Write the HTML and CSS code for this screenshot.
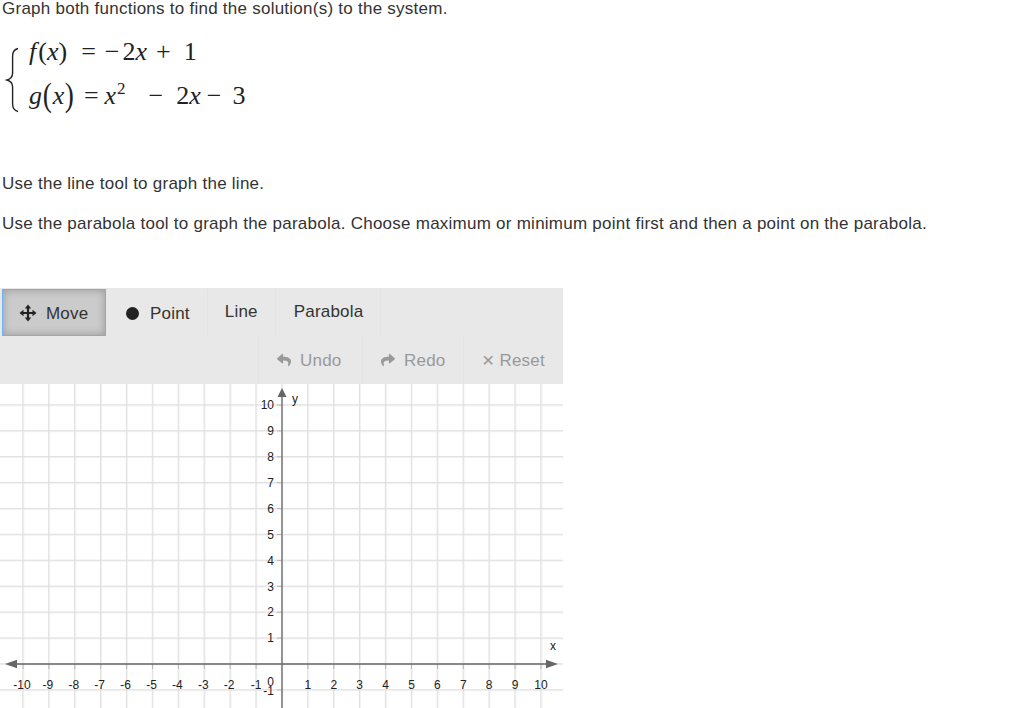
FILE: index.html
```html
<!DOCTYPE html>
<html>
<head>
<meta charset="utf-8">
<link rel="stylesheet" href="styles.css">
</head>
<body>
<p class="intro">Graph both functions to find the solution(s) to the system.</p>

<div class="system">
  <svg class="brace" width="16" height="66" viewBox="0 0 16 66">
    <path d="M14 1.5 C10 2.5 8.6 5 8.6 9 V26 C8.6 29.5 6.5 32 3 33 C6.5 34 8.6 36.5 8.6 40 V57 C8.6 61 10 63.5 14 64.5" fill="none" stroke="#222" stroke-width="1.4"/>
  </svg>
  <div class="eqs">
    <div class="eq eq1"><i>f</i>(<i>x</i>)<span class="rel">=</span><span class="neg">−</span>2<i>x</i><span class="plus">+</span>1</div>
    <div class="eq eq2"><i>g</i><span class="bp">(</span><i>x</i><span class="bp">)</span><span class="rel2">=</span><i>x</i><sup>2</sup><span class="min1">−</span>2<i>x</i><span class="min2">−</span>3</div>
  </div>
</div>

<p class="instr first">Use the line tool to graph the line.</p>
<p class="instr">Use the parabola tool to graph the parabola. Choose maximum or minimum point first and then a point on the parabola.</p>

<div class="widget">
  <div class="toolbar">
    <div class="row tools">
      <div class="tool move">
        <svg class="ico" width="18" height="18" viewBox="0 0 18 18">
          <path d="M9 2.5 V15.5 M2.5 9 H15.5" stroke="#222" stroke-width="2.2"/>
          <path d="M9 0.5 L12.2 4.5 H5.8 Z M9 17.5 L12.2 13.5 H5.8 Z M0.5 9 L4.5 5.8 V12.2 Z M17.5 9 L13.5 5.8 V12.2 Z" fill="#222"/>
        </svg>
        <span>Move</span>
      </div>
      <div class="tool point"><span class="dot"></span><span>Point</span></div>
      <div class="tool line"><span>Line</span></div>
      <div class="tool parabola"><span>Parabola</span></div>
    </div>
    <div class="row actions">
      <div class="act undo">
        <svg class="aico" width="16" height="14" viewBox="0 0 512 512"><path d="M8.3 189.8L184.3 37.9C199.7 24.5 224 35.3 224 56v80c160.6 1.8 288 34 288 186.3 0 61.4-39.6 122.3-83.3 154.1-13.7 9.9-33.1-2.5-28.1-18.6 45.3-145-21.5-183.5-176.6-185.7V360c0 20.7-24.3 31.5-39.7 18.2l-176-152c-11.1-9.6-11.1-26.8 0-36.4z" fill="#999"/></svg>
        <span>Undo</span>
      </div>
      <div class="act redo">
        <svg class="aico" width="16" height="14" viewBox="0 0 512 512"><path transform="translate(512 0) scale(-1 1)" d="M8.3 189.8L184.3 37.9C199.7 24.5 224 35.3 224 56v80c160.6 1.8 288 34 288 186.3 0 61.4-39.6 122.3-83.3 154.1-13.7 9.9-33.1-2.5-28.1-18.6 45.3-145-21.5-183.5-176.6-185.7V360c0 20.7-24.3 31.5-39.7 18.2l-176-152c-11.1-9.6-11.1-26.8 0-36.4z" fill="#999"/></svg>
        <span>Redo</span>
      </div>
      <div class="act reset">
        <span class="x">×</span>
        <span>Reset</span>
      </div>
    </div>
  </div>

  <svg class="graph" width="563" height="324" viewBox="0 0 563 324">
    <defs>
      <pattern id="grid" x="281.3" y="279.3" width="25.9" height="25.9" patternUnits="userSpaceOnUse">
        <rect x="0" y="0" width="25.9" height="1.4" fill="#e0e0e0"/>
        <rect x="0" y="0" width="1.4" height="25.9" fill="#e0e0e0"/>
      </pattern>
    </defs>
    <rect width="563" height="324" fill="#fff"/>
    <rect width="563" height="324" fill="url(#grid)"/>

    <g stroke="#b8b8b8" stroke-width="1">
      <path d="M23 280v5M48.9 280v5M74.8 280v5M100.7 280v5M126.6 280v5M152.5 280v5M178.4 280v5M204.3 280v5M230.2 280v5M256.1 280v5M307.9 280v5M333.8 280v5M359.7 280v5M385.6 280v5M411.5 280v5M437.4 280v5M463.3 280v5M489.2 280v5M515.1 280v5M541 280v5"/>
      <path d="M277 21h5M277 46.9h5M277 72.8h5M277 98.7h5M277 124.6h5M277 150.5h5M277 176.4h5M277 202.3h5M277 228.2h5M277 254.1h5M277 305.9h5"/>
    </g>

    <g stroke="#666" stroke-width="1.3">
      <line x1="282" y1="12" x2="282" y2="324"/>
      <line x1="15" y1="280" x2="548" y2="280"/>
    </g>
    <g fill="#666">
      <path d="M282 4 L286.5 13 H277.5 Z"/>
      <path d="M5 280 L17 275.8 V284.2 Z"/>
      <path d="M558 280 L546 275.8 V284.2 Z"/>
    </g>

    <g class="lbl" text-anchor="middle">
      <text x="22" y="305">-10</text>
      <text x="47.9" y="305">-9</text>
      <text x="73.8" y="305">-8</text>
      <text x="99.7" y="305">-7</text>
      <text x="125.6" y="305">-6</text>
      <text x="151.5" y="305">-5</text>
      <text x="177.4" y="305">-4</text>
      <text x="203.3" y="305">-3</text>
      <text x="229.2" y="305">-2</text>
      <text x="256.1" y="305">-1</text>
      <text x="307.9" y="305">1</text>
      <text x="333.8" y="305">2</text>
      <text x="359.7" y="305">3</text>
      <text x="385.6" y="305">4</text>
      <text x="411.5" y="305">5</text>
      <text x="437.4" y="305">6</text>
      <text x="463.3" y="305">7</text>
      <text x="489.2" y="305">8</text>
      <text x="515.1" y="305">9</text>
      <text x="541" y="305">10</text>
    </g>
    <g class="lbl" text-anchor="end">
      <text x="274" y="25.2">10</text>
      <text x="274" y="51.1">9</text>
      <text x="274" y="77">8</text>
      <text x="274" y="102.9">7</text>
      <text x="274" y="128.8">6</text>
      <text x="274" y="154.7">5</text>
      <text x="274" y="180.6">4</text>
      <text x="274" y="206.5">3</text>
      <text x="274" y="232.4">2</text>
      <text x="274" y="258.3">1</text>
      <text x="274" y="302">0</text>
      <text x="274" y="310.5">-1</text>
    </g>
    <g class="lbl">
      <text x="292" y="19">y</text>
      <text x="550" y="266">x</text>
    </g>
  </svg>
</div>
</body>
</html>
```

FILE: styles.css
```css
html, body {
  margin: 0;
  padding: 0;
  overflow: hidden;
  background: #fff;
}

body {
  font-family: "Liberation Sans", Arial, sans-serif;
  color: #333;
  font-size: 17px;
  letter-spacing: 0.25px;
  width: 1024px;
  height: 708px;
}

.intro {
  margin: 0;
  padding-left: 2px;
  line-height: 18px;
}

.system {
  display: flex;
  align-items: flex-start;
  margin-top: 20px;
  padding-left: 4px;
  height: 76px;
}

.brace {
  margin-top: 9px;
  flex: none;
}

.eqs {
  margin-left: 9px;
  font-family: "Liberation Serif", "Times New Roman", serif;
  font-size: 26px;
  letter-spacing: 0;
  color: #222;
}

.eq {
  white-space: nowrap;
}

.eq1 {
  line-height: 28px;
}

.eq2 {
  line-height: 30px;
  margin-top: 15px;
}

.eq i {
  font-style: italic;
}

.eq1 i:first-child {
  margin-right: 2px;
}

.eq sup {
  font-size: 17px;
  vertical-align: 10px;
  line-height: 0;
  margin-left: 1px;
}

.rel {
  margin: 0 9px 0 14px;
}

.neg {
  margin-right: 3px;
}

.plus {
  margin: 0 13px 0 9px;
}

.rel2 {
  margin: 0 6px 0 9px;
}

.min1 {
  margin: 0 13px 0 23px;
}

.min2 {
  margin: 0 11px 0 6px;
}

.bp {
  display: inline-block;
  transform: scale(1.05, 1.3);
  margin: 0 1px;
}

.instr {
  margin: 0;
  padding-left: 2px;
  line-height: 20px;
}

.instr.first {
  margin-top: 60px;
  margin-bottom: 20px;
}

.widget {
  margin-top: 54px;
  width: 563px;
  letter-spacing: 0.2px;
}

.toolbar {
  background: #e8e8e8;
}

.row {
  display: flex;
  height: 48px;
}

.tools {
  padding: 1px 0 0 2px;
  box-sizing: border-box;
}

.tool {
  display: flex;
  align-items: center;
  padding: 0 17px;
  color: #333;
  height: 47px;
  box-sizing: border-box;
  border-right: 1px solid #e3e3e3;
  flex: none;
}

.tool.move {
  width: 104px;
  padding: 0 0 0 16px;
  background: #cbcbcb;
  border: 1px solid #6db3f2;
  box-shadow: inset 0 0 9px rgba(0, 0, 0, 0.25);
  gap: 9px;
}

.tool.move span {
  margin-top: 2px;
}

.tool.point {
  padding: 0 17px 0 20px;
  gap: 11px;
}

.tool.point span:last-child {
  margin-top: 2px;
}

.dot {
  width: 13px;
  height: 13px;
  border-radius: 50%;
  background: #222;
  margin-top: 1px;
}

.tool.parabola {
  padding-left: 18px;
}

.tool.line span,
.tool.parabola span {
  margin-top: -2px;
}

.actions {
  justify-content: flex-end;
}

.act {
  display: flex;
  align-items: center;
  color: #999;
  padding: 0 0 0 17px;
  height: 48px;
  box-sizing: border-box;
  border-left: 1px solid #e3e3e3;
  gap: 8px;
  flex: none;
}

.act.undo {
  width: 104px;
}

.act.redo {
  width: 101px;
}

.act.reset {
  width: 100px;
  padding-left: 18px;
  gap: 5px;
}

.act span {
  margin-top: 1px;
}

.act .x {
  font-size: 21px;
  margin-top: -1px;
}

.graph {
  display: block;
}

.lbl text {
  font-family: "Liberation Sans", Arial, sans-serif;
  font-size: 12px;
  letter-spacing: 0;
  fill: #222;
}
```
